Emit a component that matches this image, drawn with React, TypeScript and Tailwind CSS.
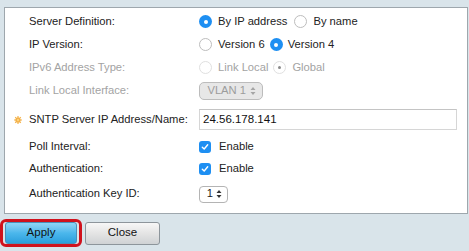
import type { ReactNode } from "react";

function Radio({ checked, disabled }: { checked?: boolean; disabled?: boolean }) {
  if (checked && !disabled) {
    return (
      <span className="w-[13px] h-[13px] rounded-full bg-[#1e8ff2] flex items-center justify-center shrink-0">
        <span className="w-[4px] h-[4px] rounded-full bg-white" />
      </span>
    );
  }
  return (
    <span
      className={`w-[13px] h-[13px] rounded-full bg-white border flex items-center justify-center shrink-0 ${
        disabled ? "border-[#e0e0e0]" : "border-[#bdbdbd]"
      }`}
    >
      {checked && <span className="w-[3px] h-[3px] rounded-full bg-[#8a8a8a]" />}
    </span>
  );
}

function Checkbox() {
  return (
    <span className="w-[12px] h-[12px] rounded-[3px] bg-[#1e8ff2] flex items-center justify-center shrink-0">
      <svg width="8" height="8" viewBox="0 0 8 8">
        <path d="M1.3 4.2 L3.2 6 L6.7 1.8" fill="none" stroke="white" strokeWidth="1.4" strokeLinecap="round" strokeLinejoin="round" />
      </svg>
    </span>
  );
}

function Arrows({ color }: { color: string }) {
  return (
    <svg width="6" height="10" viewBox="0 0 6 10" className="shrink-0">
      <path d="M3 1 L5.5 4 L0.5 4 Z M3 9 L5.5 6 L0.5 6 Z" fill={color} />
    </svg>
  );
}

function Star() {
  return (
    <svg width="8" height="8" viewBox="0 0 8 8">
      <circle cx="4" cy="4" r="2.6" fill="#f2a531" />
      <path d="M4 0 V8 M0 4 H8 M1.2 1.2 L6.8 6.8 M6.8 1.2 L1.2 6.8" stroke="#f4b24a" strokeWidth="1.2" />
      <circle cx="4" cy="4" r="1.2" fill="#fcd27a" />
    </svg>
  );
}

function Row({
  label,
  children,
  disabled,
  required,
  className = "h-[23px]",
}: {
  label: string;
  children: ReactNode;
  disabled?: boolean;
  required?: boolean;
  className?: string;
}) {
  return (
    <div className={`flex items-center ${className}`}>
      <div className="w-[24px] pl-[9px] flex items-center shrink-0">{required && <Star />}</div>
      <div className={`w-[170px] shrink-0 ${disabled ? "text-[#a3a3a3]" : "text-[#222]"}`}>{label}</div>
      <div className="flex items-center">{children}</div>
    </div>
  );
}

export default function App() {
  return (
    <div className="w-[469px] h-[251px] bg-[#d9e4ea] pt-[7px] font-['Liberation_Sans',Arial,sans-serif] text-[11.2px] leading-none">
      <div className="ml-[4px] w-[464px] bg-white border border-[#9ea7ad] pt-[2px] pb-[8px]">
        <Row label="Server Definition:">
          <Radio checked />
          <span className="ml-[6px] text-[#222]">By IP address</span>
          <span className="ml-[7px]"><Radio /></span>
          <span className="ml-[6px] text-[#222]">By name</span>
        </Row>
        <Row label="IP Version:">
          <Radio />
          <span className="ml-[6px] text-[#222]">Version 6</span>
          <span className="ml-[5px]"><Radio checked /></span>
          <span className="ml-[5px] text-[#222]">Version 4</span>
        </Row>
        <Row label="IPv6 Address Type:" disabled>
          <Radio disabled />
          <span className="ml-[6px] text-[#a3a3a3]">Link Local</span>
          <span className="ml-[5px]"><Radio checked disabled /></span>
          <span className="ml-[6px] text-[#a3a3a3]">Global</span>
        </Row>
        <Row label="Link Local Interface:" disabled>
          <div className="w-[64px] h-[18px] rounded-[5px] border border-[#bcbcbc] bg-[#e7e7e7] flex items-center justify-end gap-[4px] pr-[6px] text-[#9c9c9c]">
            <span>VLAN 1</span>
            <Arrows color="#a5a5a5" />
          </div>
        </Row>
        <Row label="SNTP Server IP Address/Name:" required className="h-[23px] mt-[6px]">
          <div className="w-[258px] h-[21px] border border-[#d6d6d6] border-t-[#c4c4c4] flex items-center pl-[3px] text-[#111] text-[11.5px]">
            24.56.178.141
          </div>
        </Row>
        <Row label="Poll Interval:" className="h-[22px] mt-[5px]">
          <Checkbox />
          <span className="ml-[8px] text-[#222]">Enable</span>
        </Row>
        <Row label="Authentication:" className="h-[22px]">
          <Checkbox />
          <span className="ml-[8px] text-[#222]">Enable</span>
        </Row>
        <Row label="Authentication Key ID:" className="h-[22px] mt-[3px]">
          <div className="w-[29px] h-[17px] rounded-[4px] border border-[#b4b4b4] bg-white flex items-center justify-end gap-[3px] pr-[5px] text-[#222]">
            <span>1</span>
            <Arrows color="#333" />
          </div>
        </Row>
      </div>
      <div className="mt-[5px] flex items-center">
        <div className="w-[82px] h-[28px] rounded-[6px] border-[3px] border-[#d0121d] flex items-center justify-center">
          <button className="w-[72px] h-[22px] rounded-[3px] border border-[#4a8fb8] bg-gradient-to-b from-[#8fd5f6] via-[#4bb7ec] to-[#2a9fdc] text-[11.5px] text-[#111]">
            Apply
          </button>
        </div>
        <button className="ml-[3px] w-[75px] h-[23px] rounded-[3px] border border-[#8d959b] bg-gradient-to-b from-[#f7f7f7] via-[#e4e4e4] to-[#cfd2d4] text-[11.5px] text-[#111]">
          Close
        </button>
      </div>
    </div>
  );
}
